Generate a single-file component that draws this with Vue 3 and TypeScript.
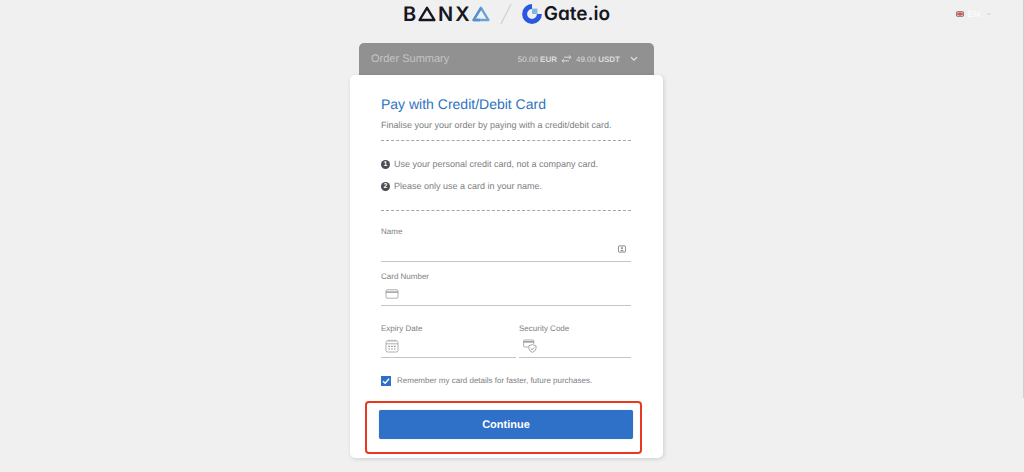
<script setup lang="ts">
import { ref } from 'vue'

const tips: string[] = [
  'Use your personal credit card, not a company card.',
  'Please only use a card in your name.',
]
const name = ref('')
const cardNumber = ref('')
const expiry = ref('')
const code = ref('')
const remember = ref(true)
</script>

<template>
  <div class="page">
    <header class="top">
      <div class="logos">
        <div class="banxa">
          <span>B</span>
          <svg width="18" height="16" viewBox="0 0 18 16"><path d="M9 1.8 L16.4 14 H1.6 Z" fill="none" stroke="#15171f" stroke-width="2.4" stroke-linejoin="round" /></svg>
          <span>N</span>
          <span>X</span>
          <svg width="18" height="16" viewBox="0 0 18 16"><path d="M9 1.8 L16.4 14 H1.6 Z" fill="none" stroke="#68a3d8" stroke-width="2.4" stroke-linejoin="round" /><path d="M9 1.8 L1.6 14 H8" fill="none" stroke="#5590cf" stroke-width="2.4" stroke-linejoin="round" /></svg>
        </div>
        <svg class="slash" width="12" height="22" viewBox="0 0 12 22"><path d="M11 1 L1 21" stroke="#cfcfcf" stroke-width="1.2" /></svg>
        <div class="gate">
          <svg width="20" height="20" viewBox="0 0 20 20"><path d="M10 2.6 A7.4 7.4 0 1 0 17.4 10" fill="none" stroke="#2a58e0" stroke-width="5" /><rect x="10" y="4.6" width="5.4" height="5.4" fill="#83b8da" /></svg>
          <span>Gate.io</span>
        </div>
      </div>
      <button class="lang" type="button" aria-label="Language">
        <svg width="8" height="6" viewBox="0 0 8 6"><rect width="8" height="6" fill="#66698c" /><path d="M0 0 L8 6 M8 0 L0 6" stroke="#d9c6cc" stroke-width="1.2" /><path d="M4 0 V6 M0 3 H8" stroke="#e9dfe2" stroke-width="2.2" /><path d="M4 0 V6 M0 3 H8" stroke="#d2473f" stroke-width="1.3" /></svg>
        <span>EN</span>
        <svg class="lang-arrow" width="6" height="4" viewBox="0 0 6 4"><path d="M1 1 L3 3 L5 1" fill="none" stroke="#d6d6d6" /></svg>
      </button>
    </header>

    <main class="column">
      <button class="summary" type="button">
        <span class="summary-title">Order Summary</span>
        <span>50.00 <b>EUR</b></span>
        <svg class="swap" width="11" height="8" viewBox="0 0 11 8"><path d="M3 2.2 H10 M8.2 0.4 L10 2.2 L8.2 4 M8 5.8 H1 M2.8 4 L1 5.8 L2.8 7.6" fill="none" stroke="#dcdcdc" stroke-width="1" /></svg>
        <span>49.00 <b>USDT</b></span>
        <svg class="chevron" width="8" height="6" viewBox="0 0 8 6"><path d="M1 1.2 L4 4.2 L7 1.2" fill="none" stroke="#e6e6e6" stroke-width="1.2" /></svg>
      </button>

      <form class="card" @submit.prevent>
        <h1>Pay with Credit/Debit Card</h1>
        <p class="lead">Finalise your your order by paying with a credit/debit card.</p>
        <ol class="tips">
          <li v-for="(tip, i) in tips" :key="tip"><span class="num">{{ i + 1 }}</span>{{ tip }}</li>
        </ol>

        <div class="field">
          <label for="name">Name</label>
          <div class="line tall">
            <input id="name" v-model="name" type="text" />
            <svg class="contact" width="8" height="8" viewBox="0 0 8 8"><rect x="0.5" y="1" width="7" height="6" rx="0.5" fill="none" stroke="#77797c" stroke-width="0.8" /><path d="M1 0.3 H7 M1 7.7 H7" stroke="#a0a0a0" stroke-width="0.5" /><circle cx="4" cy="3.1" r="0.9" fill="#66686c" /><path d="M2.2 5.7 Q4 3.7 5.8 5.7 Z" fill="#66686c" /></svg>
          </div>
        </div>

        <div class="field number">
          <label for="number">Card Number</label>
          <div class="line">
            <svg width="14" height="14" viewBox="0 0 14 14"><rect x="1" y="2.8" width="12" height="8.4" rx="1" fill="none" stroke="#9b9da0" stroke-width="0.8" /><path d="M1 5.1 H13" stroke="#8f9195" stroke-width="1.3" /></svg>
            <input id="number" v-model="cardNumber" type="text" inputmode="numeric" />
          </div>
        </div>

        <div class="pair">
          <div class="field">
            <label for="expiry">Expiry Date</label>
            <div class="line">
              <svg width="14" height="14" viewBox="0 0 14 14"><rect x="1" y="1.8" width="12" height="11.2" rx="1.6" fill="none" stroke="#9b9da0" stroke-width="0.8" /><path d="M1 4.8 H13 M4 0.6 V2.8 M7 0.6 V2.8 M10 0.6 V2.8" stroke="#9b9da0" stroke-width="0.8" /><path d="M3.4 7.3 H11 M3.4 10 H11" stroke="#8b8d91" stroke-width="1.2" stroke-dasharray="1.5 1.3" /></svg>
              <input id="expiry" v-model="expiry" type="text" />
            </div>
          </div>
          <div class="field">
            <label for="code">Security Code</label>
            <div class="line">
              <svg width="14" height="14" viewBox="0 0 14 14"><path d="M5 8 H1.4 Q0.6 8 0.6 7.2 V1.8 Q0.6 1 1.4 1 H10 Q10.8 1 10.8 1.8 V5" fill="none" stroke="#9b9da0" stroke-width="0.8" /><path d="M0.6 2.9 H10.8" stroke="#8f9195" stroke-width="1.4" /><path d="M9.4 5.6 L13 6.8 V9.4 Q12.8 12 9.4 13.4 Q6 12 5.8 9.4 V6.8 Z" fill="#fff" stroke="#8f9195" stroke-width="0.8" /><path d="M7.7 9.5 L9 10.7 L11.3 8.3" fill="none" stroke="#8f9195" stroke-width="0.9" /></svg>
              <input id="code" v-model="code" type="text" inputmode="numeric" />
            </div>
          </div>
        </div>

        <label class="remember">
          <input v-model="remember" type="checkbox" />
          <svg width="10" height="10" viewBox="0 0 10 10" aria-hidden="true"><path v-if="remember" d="M2 5.2 L4.1 7.2 L8.1 2.8" fill="none" stroke="#fff" stroke-width="1.4" /></svg>
          <span>Remember my card details for faster, future purchases.</span>
        </label>

        <div class="highlight">
          <button class="continue" type="submit">Continue</button>
        </div>
      </form>
    </main>
  </div>
</template>

<style>
body {
  margin: 0;
  background: #f0f0f0;
}
</style>

<style scoped>
.page {
  min-height: 100vh;
  box-sizing: border-box;
  padding: 0 11px 13px 0;
  font-family: "Liberation Sans", Arial, sans-serif;
  text-rendering: geometricPrecision;
  color: #7c7e82;
  background: linear-gradient(#cfcfcf, #cfcfcf) right top / 1px 398px no-repeat #f0f0f0;
}
button {
  font-family: inherit;
  text-rendering: inherit;
  border: 0;
  cursor: pointer;
}
svg {
  flex: none;
  display: block;
}
.top {
  display: grid;
  grid-template-columns: 1fr auto 1fr;
  align-items: center;
  height: 28px;
  margin-bottom: 15px;
}
.logos {
  grid-column: 2;
  display: flex;
  align-items: center;
}
.banxa {
  display: flex;
  align-items: center;
  gap: 2px;
  font: 600 20px/28px Inter, sans-serif;
  color: #15171f;
}
.slash {
  margin: 0 10px;
}
.gate {
  display: flex;
  align-items: center;
  gap: 2px;
  font: 600 19px/28px Inter, sans-serif;
  font-feature-settings: "cv11" 1;
  color: #15171f;
}
.lang {
  justify-self: end;
  display: flex;
  align-items: center;
  gap: 3px;
  margin-right: 21px;
  padding: 0;
  background: none;
  font-size: 9px;
  color: #fff;
}
.lang-arrow {
  margin-left: 3px;
}
.column {
  width: 313px;
  max-width: 100%;
  margin: 0 auto;
}
.summary {
  display: flex;
  align-items: center;
  width: calc(100% - 18px);
  height: 32px;
  margin: 0 9px;
  padding: 0 16px 0 12px;
  border-radius: 5px 5px 0 0;
  background: #919191;
  color: #dcdcdc;
  font-size: 8px;
}
.summary-title {
  margin-right: auto;
  font-size: 11px;
  color: #c4c4c4;
}
.swap {
  margin: 0 4px;
}
.chevron {
  margin-left: 10px;
}
.card {
  box-sizing: border-box;
  padding: 20px 32px 4px 31px;
  border-radius: 5px;
  background: #fff;
  box-shadow: 1px 1px 4px rgba(0, 0, 0, 0.14);
}
h1 {
  margin: 0;
  font-size: 14px;
  line-height: 18px;
  font-weight: 400;
  color: #2f73bf;
}
.lead {
  margin: 0;
  padding: 6px 0 9px;
  font-size: 9px;
  line-height: 12px;
}
.tips {
  margin: 0;
  padding: 12px 0 13px;
  list-style: none;
  border-top: 1px dashed #a5a5a5;
  border-bottom: 1px dashed #a5a5a5;
  font-size: 9px;
}
.tips li {
  display: flex;
  align-items: center;
  gap: 4px;
  height: 22px;
}
.num {
  width: 9px;
  height: 9px;
  border-radius: 50%;
  background: #4a4b55;
  color: #fff;
  font-size: 7px;
  line-height: 9px;
  font-weight: 700;
  text-align: center;
}
.field {
  min-width: 0;
}
.field label {
  display: block;
  font-size: 8px;
  line-height: 10px;
}
.tips + .field {
  padding-top: 16px;
}
.line {
  display: flex;
  align-items: center;
  height: 23px;
  padding-left: 4px;
  border-bottom: 1px solid #c4c4c4;
}
.line.tall {
  height: 24px;
  padding-right: 5px;
}
.line input {
  flex: 1;
  min-width: 0;
  padding: 0 4px;
  border: 0;
  outline: 0;
  background: none;
  font: 9px "Liberation Sans", sans-serif;
  color: #555;
}
.number {
  padding-top: 10px;
}
.pair {
  display: grid;
  grid-template-columns: minmax(0, 135fr) minmax(0, 112fr);
  gap: 3px;
  padding-top: 18px;
}
.remember {
  display: flex;
  align-items: center;
  gap: 6px;
  margin-top: 18px;
  font-size: 8px;
  line-height: 10px;
}
.remember input {
  appearance: none;
  width: 10px;
  height: 10px;
  margin: 0;
  background: #fff;
  border: 1px solid #2d70c9;
}
.remember input:checked {
  background: #2d70c9;
}
.remember svg {
  margin-left: -16px;
  pointer-events: none;
}
.highlight {
  margin: 15px -11px 0 -16px;
  padding: 7px 7px 13px 12px;
  border: 2px solid #e8391f;
  border-radius: 4px;
}
.continue {
  display: block;
  width: 100%;
  height: 29px;
  border-radius: 2px;
  background: #2f70c8;
  box-shadow: 0 0 1px rgba(0, 0, 0, 0.4);
  color: #fff;
  font-size: 11px;
  font-weight: 700;
}
</style>
